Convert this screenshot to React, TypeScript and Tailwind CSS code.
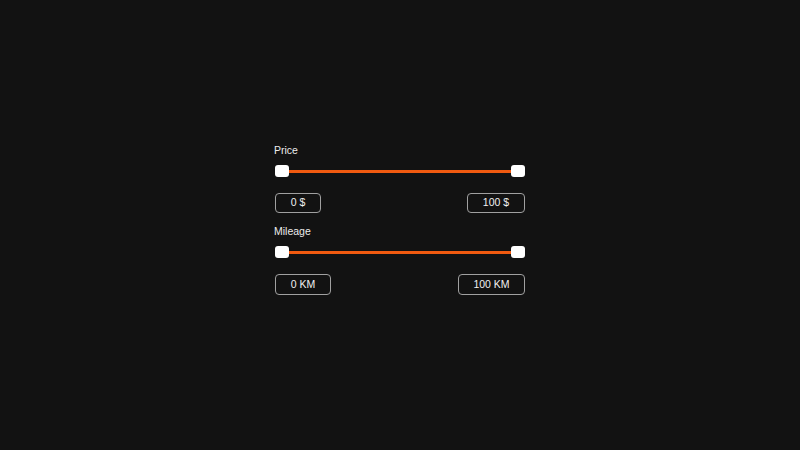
import React from "react";

function RangeBlock({
  label,
  min,
  max,
  minW,
  maxW,
  boxH,
}: {
  label: string;
  min: string;
  max: string;
  minW: string;
  maxW: string;
  boxH: string;
}) {
  return (
    <div className="flex flex-col w-[252px]">
      <div className="text-[10.5px] leading-[14px] text-[#ececec] h-[14px]">{label}</div>
      <div className="relative mt-[8px] h-[12px] mx-[1px]">
        <div className="absolute left-[7px] right-[7px] top-[5px] h-[3px] bg-[#f05a10]" />
        <div className="absolute left-0 top-0 w-[14px] h-[12px] rounded-[3px] bg-white" />
        <div className="absolute right-0 top-0 w-[14px] h-[12px] rounded-[3px] bg-white" />
      </div>
      <div className="flex justify-between mt-[16px] mx-[1px]">
        <div
          className={`${boxH} ${minW} rounded-[4px] border border-[#a0a0a0] text-[10.5px] text-[#f0f0f0] flex items-center justify-center`}
        >
          {min}
        </div>
        <div
          className={`${boxH} ${maxW} rounded-[4px] border border-[#a0a0a0] text-[10.5px] text-[#f0f0f0] flex items-center justify-center`}
        >
          {max}
        </div>
      </div>
    </div>
  );
}

export default function App() {
  return (
    <div
      className="w-[800px] h-[450px] bg-[#121212] flex flex-col items-center pt-[143px] gap-[11px]"
      style={{ fontFamily: '"Liberation Sans", Arial, sans-serif' }}
    >
      <RangeBlock label="Price" min="0 $" max="100 $" minW="w-[46px]" maxW="w-[58px]" boxH="h-[20px]" />
      <RangeBlock label="Mileage" min="0 KM" max="100 KM" minW="w-[56px]" maxW="w-[67px]" boxH="h-[21px]" />
    </div>
  );
}
